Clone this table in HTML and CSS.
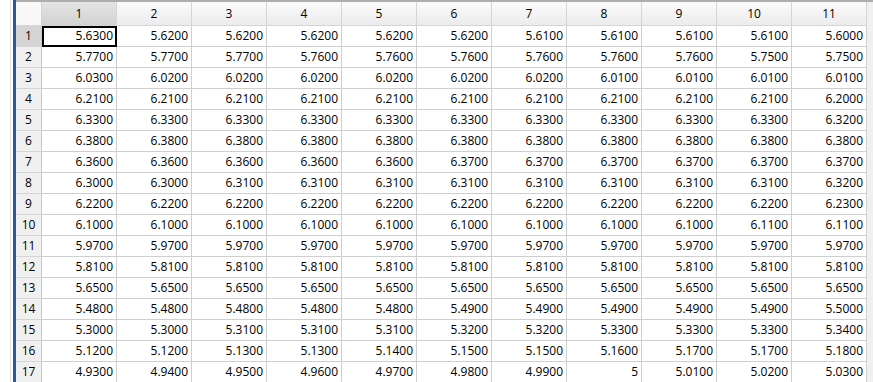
FILE: index.html
```html
<!DOCTYPE html>
<html>
<head>
<meta charset="utf-8">
<link rel="stylesheet" href="styles.css">
</head>
<body>
<div class="app">
  <div class="gutter"></div>
  <div class="edge"></div>
  <div class="sheet">
    <div class="grid" id="grid">
      <div class="corner"></div>
      <div class="ch sel">1</div><div class="ch">2</div><div class="ch">3</div><div class="ch">4</div><div class="ch">5</div><div class="ch">6</div><div class="ch">7</div><div class="ch">8</div><div class="ch">9</div><div class="ch">10</div><div class="ch">11</div>

      <div class="rh sel">1</div><div class="c focus">5.6300</div><div class="c">5.6200</div><div class="c">5.6200</div><div class="c">5.6200</div><div class="c">5.6200</div><div class="c">5.6200</div><div class="c">5.6100</div><div class="c">5.6100</div><div class="c">5.6100</div><div class="c">5.6100</div><div class="c">5.6000</div>
      <div class="rh">2</div><div class="c">5.7700</div><div class="c">5.7700</div><div class="c">5.7700</div><div class="c">5.7600</div><div class="c">5.7600</div><div class="c">5.7600</div><div class="c">5.7600</div><div class="c">5.7600</div><div class="c">5.7600</div><div class="c">5.7500</div><div class="c">5.7500</div>
      <div class="rh">3</div><div class="c">6.0300</div><div class="c">6.0200</div><div class="c">6.0200</div><div class="c">6.0200</div><div class="c">6.0200</div><div class="c">6.0200</div><div class="c">6.0200</div><div class="c">6.0100</div><div class="c">6.0100</div><div class="c">6.0100</div><div class="c">6.0100</div>
      <div class="rh">4</div><div class="c">6.2100</div><div class="c">6.2100</div><div class="c">6.2100</div><div class="c">6.2100</div><div class="c">6.2100</div><div class="c">6.2100</div><div class="c">6.2100</div><div class="c">6.2100</div><div class="c">6.2100</div><div class="c">6.2100</div><div class="c">6.2000</div>
      <div class="rh">5</div><div class="c">6.3300</div><div class="c">6.3300</div><div class="c">6.3300</div><div class="c">6.3300</div><div class="c">6.3300</div><div class="c">6.3300</div><div class="c">6.3300</div><div class="c">6.3300</div><div class="c">6.3300</div><div class="c">6.3300</div><div class="c">6.3200</div>
      <div class="rh">6</div><div class="c">6.3800</div><div class="c">6.3800</div><div class="c">6.3800</div><div class="c">6.3800</div><div class="c">6.3800</div><div class="c">6.3800</div><div class="c">6.3800</div><div class="c">6.3800</div><div class="c">6.3800</div><div class="c">6.3800</div><div class="c">6.3800</div>
      <div class="rh">7</div><div class="c">6.3600</div><div class="c">6.3600</div><div class="c">6.3600</div><div class="c">6.3600</div><div class="c">6.3600</div><div class="c">6.3700</div><div class="c">6.3700</div><div class="c">6.3700</div><div class="c">6.3700</div><div class="c">6.3700</div><div class="c">6.3700</div>
      <div class="rh">8</div><div class="c">6.3000</div><div class="c">6.3000</div><div class="c">6.3100</div><div class="c">6.3100</div><div class="c">6.3100</div><div class="c">6.3100</div><div class="c">6.3100</div><div class="c">6.3100</div><div class="c">6.3100</div><div class="c">6.3100</div><div class="c">6.3200</div>
      <div class="rh">9</div><div class="c">6.2200</div><div class="c">6.2200</div><div class="c">6.2200</div><div class="c">6.2200</div><div class="c">6.2200</div><div class="c">6.2200</div><div class="c">6.2200</div><div class="c">6.2200</div><div class="c">6.2200</div><div class="c">6.2200</div><div class="c">6.2300</div>
      <div class="rh">10</div><div class="c">6.1000</div><div class="c">6.1000</div><div class="c">6.1000</div><div class="c">6.1000</div><div class="c">6.1000</div><div class="c">6.1000</div><div class="c">6.1000</div><div class="c">6.1000</div><div class="c">6.1000</div><div class="c">6.1100</div><div class="c">6.1100</div>
      <div class="rh">11</div><div class="c">5.9700</div><div class="c">5.9700</div><div class="c">5.9700</div><div class="c">5.9700</div><div class="c">5.9700</div><div class="c">5.9700</div><div class="c">5.9700</div><div class="c">5.9700</div><div class="c">5.9700</div><div class="c">5.9700</div><div class="c">5.9700</div>
      <div class="rh">12</div><div class="c">5.8100</div><div class="c">5.8100</div><div class="c">5.8100</div><div class="c">5.8100</div><div class="c">5.8100</div><div class="c">5.8100</div><div class="c">5.8100</div><div class="c">5.8100</div><div class="c">5.8100</div><div class="c">5.8100</div><div class="c">5.8100</div>
      <div class="rh">13</div><div class="c">5.6500</div><div class="c">5.6500</div><div class="c">5.6500</div><div class="c">5.6500</div><div class="c">5.6500</div><div class="c">5.6500</div><div class="c">5.6500</div><div class="c">5.6500</div><div class="c">5.6500</div><div class="c">5.6500</div><div class="c">5.6500</div>
      <div class="rh">14</div><div class="c">5.4800</div><div class="c">5.4800</div><div class="c">5.4800</div><div class="c">5.4800</div><div class="c">5.4800</div><div class="c">5.4900</div><div class="c">5.4900</div><div class="c">5.4900</div><div class="c">5.4900</div><div class="c">5.4900</div><div class="c">5.5000</div>
      <div class="rh">15</div><div class="c">5.3000</div><div class="c">5.3000</div><div class="c">5.3100</div><div class="c">5.3100</div><div class="c">5.3100</div><div class="c">5.3200</div><div class="c">5.3200</div><div class="c">5.3300</div><div class="c">5.3300</div><div class="c">5.3300</div><div class="c">5.3400</div>
      <div class="rh">16</div><div class="c">5.1200</div><div class="c">5.1200</div><div class="c">5.1300</div><div class="c">5.1300</div><div class="c">5.1400</div><div class="c">5.1500</div><div class="c">5.1500</div><div class="c">5.1600</div><div class="c">5.1700</div><div class="c">5.1700</div><div class="c">5.1800</div>
      <div class="rh">17</div><div class="c">4.9300</div><div class="c">4.9400</div><div class="c">4.9500</div><div class="c">4.9600</div><div class="c">4.9700</div><div class="c">4.9800</div><div class="c">4.9900</div><div class="c">5</div><div class="c">5.0100</div><div class="c">5.0200</div><div class="c">5.0300</div>
    </div>
  </div>
</div>
</body>
</html>
```

FILE: styles.css
```css
html, body {
  margin: 0;
  padding: 0;
  background: #ffffff;
}

body {
  font-family: "Open Sans", "Noto Sans", "Liberation Sans", sans-serif;
  font-size: 12px;
  color: #000;
}

.app {
  display: flex;
  width: 873px;
  height: 382px;
  overflow: hidden;
}

.gutter {
  width: 13px;
  flex: none;
  box-sizing: border-box;
  background: #ffffff;
  border-left: 10px solid #ffffff;
  border-right: 2px solid #ffffff;
  box-shadow: inset 1px 0 0 #e2e2e2;
}

.edge {
  width: 3px;
  flex: none;
  background: #2c5a96;
}

.sheet {
  flex: 1;
  background: #f0f0f0;
  border-top: 2px solid #adadad;
  overflow: hidden;
}

.grid {
  display: grid;
  grid-template-columns: 26px repeat(11, 75px);
  grid-template-rows: 24px;
  grid-auto-rows: 21px;
  width: max-content;
}

.grid > div {
  box-sizing: border-box;
  white-space: nowrap;
  overflow: hidden;
}

.corner {
  background: #f9f9fa;
  border-right: 1px solid #d5d5d5;
  border-bottom: 1px solid #d5d5d5;
}

.ch {
  background: linear-gradient(#fbfbfb, #ececec);
  border-right: 1px solid #d5d5d5;
  border-bottom: 1px solid #d5d5d5;
  text-align: center;
  line-height: 23px;
}

.ch.sel {
  background: linear-gradient(#e4e4e4, #d2d2d2);
}

.rh {
  background: #f0f0f0;
  border-right: 1px solid #c8c8c8;
  border-bottom: 1px solid #d5d5d5;
  text-align: center;
  line-height: 20px;
}

.rh.sel {
  background: #d4d4d4;
}

.c {
  background: #ffffff;
  border-right: 1px solid #cfcfcf;
  border-bottom: 1px solid #cfcfcf;
  text-align: right;
  padding-right: 3px;
  line-height: 20px;
}

.c.focus {
  outline: 2px solid #000;
  outline-offset: -2px;
}
```
